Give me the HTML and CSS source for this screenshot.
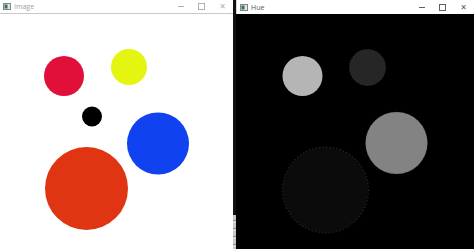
FILE: index.html
```html
<!DOCTYPE html>
<html lang="en">
<head>
    <meta charset="UTF-8">
    <title>Image / Hue</title>
    <link rel="stylesheet" href="styles.css">
</head>
<body>
    <div class="desktop">
        <!-- Original image window -->
        <div class="window window-left">
            <div class="titlebar">
                <svg class="app-icon" width="8" height="7" viewBox="0 0 8 7">
                    <rect x="0.5" y="0.5" width="7" height="6" fill="#dfe7e4" stroke="#7a8a86"/>
                    <rect x="1.5" y="1.5" width="3" height="4" fill="#3c6e5e"/>
                </svg>
                <span class="title">Image</span>
                <div class="controls">
                    <span class="ctl ctl-min"></span>
                    <span class="ctl ctl-max"></span>
                    <span class="ctl ctl-close">×</span>
                </div>
            </div>
            <svg class="canvas canvas-light" width="233" height="235" viewBox="0 0 233 235">
                <circle cx="64" cy="62" r="20" fill="#e0103b"/>
                <circle cx="129" cy="53" r="18" fill="#e5f512"/>
                <circle cx="92" cy="102.5" r="10" fill="#000"/>
                <circle cx="158" cy="129.5" r="31" fill="#1042ef"/>
                <circle cx="86.5" cy="174.5" r="41.5" fill="#e03512"/>
            </svg>
        </div>

        <div class="gap">
            <div class="gap-top"></div>
            <div class="gap-bottom"></div>
        </div>

        <!-- Hue channel window -->
        <div class="window window-right">
            <div class="titlebar">
                <svg class="app-icon" width="8" height="7" viewBox="0 0 8 7">
                    <rect x="0.5" y="0.5" width="7" height="6" fill="#dfe7e4" stroke="#7a8a86"/>
                    <rect x="1.5" y="1.5" width="3" height="4" fill="#3c6e5e"/>
                </svg>
                <span class="title">Hue</span>
                <div class="controls">
                    <span class="ctl ctl-min"></span>
                    <span class="ctl ctl-max"></span>
                    <span class="ctl ctl-close">×</span>
                </div>
            </div>
            <svg class="canvas canvas-dark" width="238" height="235" viewBox="0 0 238 235">
                <circle cx="66.5" cy="62" r="20" fill="#b5b5b5"/>
                <circle cx="131.5" cy="53.5" r="18" fill="#262626" stroke="#303030" stroke-width="1.2" stroke-dasharray="1 1.5"/>
                <circle cx="160.5" cy="129" r="31" fill="#838383" stroke="#444" stroke-width="0.8" stroke-dasharray="1 4"/>
                <circle cx="89.5" cy="176" r="43" fill="#0b0b0b" stroke="#2a2a2a" stroke-width="1.3" stroke-dasharray="1 2.5"/>
            </svg>
        </div>
    </div>
</body>
</html>
```

FILE: styles.css
```css
html, body {
    margin: 0;
    padding: 0;
    background: #fff;
}
.desktop {
    display: flex;
    width: 474px;
    height: 249px;
    overflow: hidden;
}
.window {
    display: flex;
    flex-direction: column;
    background: #fff;
}
.window-left {
    width: 233px;
}
.window-right {
    width: 238px;
    background: #000;
}
.titlebar {
    display: flex;
    align-items: center;
    height: 13px;
    background: #fff;
    font-family: "Open Sans", "Noto Sans", sans-serif;
    font-size: 7px;
    color: #a0a0a0;
    padding-left: 3px;
}
.window-left .titlebar {
    border-bottom: 1px solid #c9c9c9;
}
.window-right .titlebar {
    height: 14px;
    border-left: 1px solid #d6d6d6;
    color: #555;
}
.app-icon {
    flex: none;
    margin-right: 3px;
}
.title {
    flex: 1;
    line-height: 13px;
}
.controls {
    display: flex;
    align-items: center;
    gap: 14px;
    padding-right: 7px;
}
.ctl {
    display: block;
    width: 7px;
    height: 7px;
}
.ctl-min {
    width: 6px;
    height: 0;
    border-top: 1px solid #b0b0b0;
}
.ctl-max {
    box-sizing: border-box;
    border: 1px solid #b0b0b0;
}
.ctl-close {
    font-size: 10px;
    line-height: 7px;
    color: #a8a8a8;
    text-align: center;
}
.window-right .ctl-min,
.window-right .ctl-max {
    border-color: #606060;
}
.window-right .ctl-close {
    color: #505050;
}
.canvas {
    display: block;
}
.canvas-light {
    background: #fff;
}
.canvas-dark {
    background: #000;
}
.gap {
    display: flex;
    flex-direction: column;
    width: 3px;
}
.gap-top {
    flex: 1;
    background: #111;
}
.gap-bottom {
    height: 34px;
    background: repeating-linear-gradient(#c8c8c8 0 5px, #8a8a8a 5px 6px, #d8d8d8 6px 8px);
}
```
